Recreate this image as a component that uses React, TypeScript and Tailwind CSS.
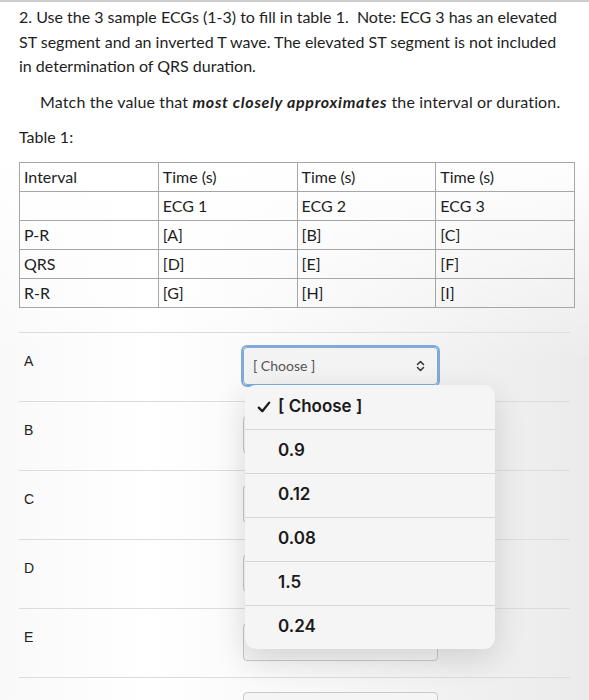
import React from 'react';

const rows = [
  ['Interval', 'Time (s)', 'Time (s)', 'Time (s)'],
  ['', 'ECG 1', 'ECG 2', 'ECG 3'],
  ['P-R', '[A]', '[B]', '[C]'],
  ['QRS', '[D]', '[E]', '[F]'],
  ['R-R', '[G]', '[H]', '[I]'],
];

const letters = ['A', 'B', 'C', 'D', 'E', 'F'];
const options = ['0.9', '0.12', '0.08', '1.5', '0.24'];

const UpDown = () => (
  <svg width="9" height="12" viewBox="0 0 9 12" fill="none" stroke="#3a3a3a" strokeWidth="1.6" strokeLinecap="round" strokeLinejoin="round">
    <path d="M1.5 4.5 L4.5 1.5 L7.5 4.5" />
    <path d="M1.5 7.5 L4.5 10.5 L7.5 7.5" />
  </svg>
);

const Check = () => (
  <svg width="14" height="14" viewBox="0 0 14 14" fill="none" stroke="#1a1a1a" strokeWidth="2.3" strokeLinecap="round" strokeLinejoin="round">
    <path d="M1.8 7.6 L5.3 11.2 L12.2 2.6" />
  </svg>
);

const Popup: React.FC = () => (
  <div className="absolute left-[2px] top-[38px] z-10 w-[250px] overflow-hidden rounded-[11px] bg-[#f5f5f5] font-['Inter',sans-serif] text-[17px] font-semibold text-[#1a1a1a] shadow-[0_10px_32px_rgba(0,0,0,0.14)]">
    <div className="flex h-[44px] items-center gap-[7px] pl-[12px]">
      <Check />
      <span>[ Choose ]</span>
    </div>
    {options.map((o) => (
      <div key={o} className="flex h-[44px] items-center border-t border-[#d6d6d6] pl-[33px]">
        {o}
      </div>
    ))}
  </div>
);

const App: React.FC = () => {
  return (
    <div className="min-h-[700px] overflow-hidden border-t-2 border-[#cdcdcd] bg-[linear-gradient(to_bottom,#fff_150px,rgba(255,255,255,0)_360px),linear-gradient(to_right,#f9f9f9,#fff_25%,#ebebeb)] font-['Lato',sans-serif] text-[#1e1e1e]">
      <div className="px-[19px] pt-[3px]">
        <p className="w-[545px] text-[16px] leading-[24.5px]">
          2. Use the 3 sample ECGs (1-3) to fill in table 1.&nbsp; Note: ECG 3 has an elevated ST segment and an inverted T wave. The elevated ST segment is not included in determination of QRS duration.
        </p>
        <p className="mt-[11px] pl-[21px] text-[16px] leading-[24.5px] tracking-[0.15px]">
          Match the value that <strong><em className="tracking-[0.7px]">most closely approximates</em></strong> the interval or duration.
        </p>
        <p className="mt-[11px] text-[16px] leading-[24.5px]">Table 1:</p>

        <table className="mt-[12px] w-[556px] table-fixed border-collapse border border-[#a6a6a6] text-[16px]">
          <tbody>
            {rows.map((r, i) => (
              <tr key={i} className="h-[29px]">
                {r.map((c, j) => (
                  <td key={j} className="border border-[#a6a6a6] px-[4px] align-middle leading-[20px]">
                    {c}
                  </td>
                ))}
              </tr>
            ))}
          </tbody>
        </table>

        <div className="mt-[24px]">
          {letters.map((l, i) => (
            <div key={l} className="grid h-[69px] grid-cols-[224px_1fr] border-t border-[#dcdcdc] pt-[14px]">
              <div className="pl-[5px] pt-[6px] font-['Liberation_Sans',sans-serif] text-[14px] leading-[16px] text-[#222]">
                {l}
              </div>
              <div className="relative">
                <div
                  className={
                    i === 0
                      ? 'flex h-[38px] w-[195px] items-center justify-between rounded-[4px] border border-[#80aad9] bg-[#f3f3f3] pl-[9px] pr-[12px] text-[14px] text-[#555] outline-2 outline-[#80aad9]'
                      : 'flex h-[38px] w-[195px] items-center justify-between rounded-[4px] border border-[#c4c9cc] bg-[#f5f5f5] pl-[9px] pr-[12px] text-[14px] text-[#555]'
                  }
                >
                  <span>[ Choose ]</span>
                  <UpDown />
                </div>
                {i === 0 && <Popup />}
              </div>
            </div>
          ))}
        </div>
      </div>
    </div>
  );
};

export default App;
